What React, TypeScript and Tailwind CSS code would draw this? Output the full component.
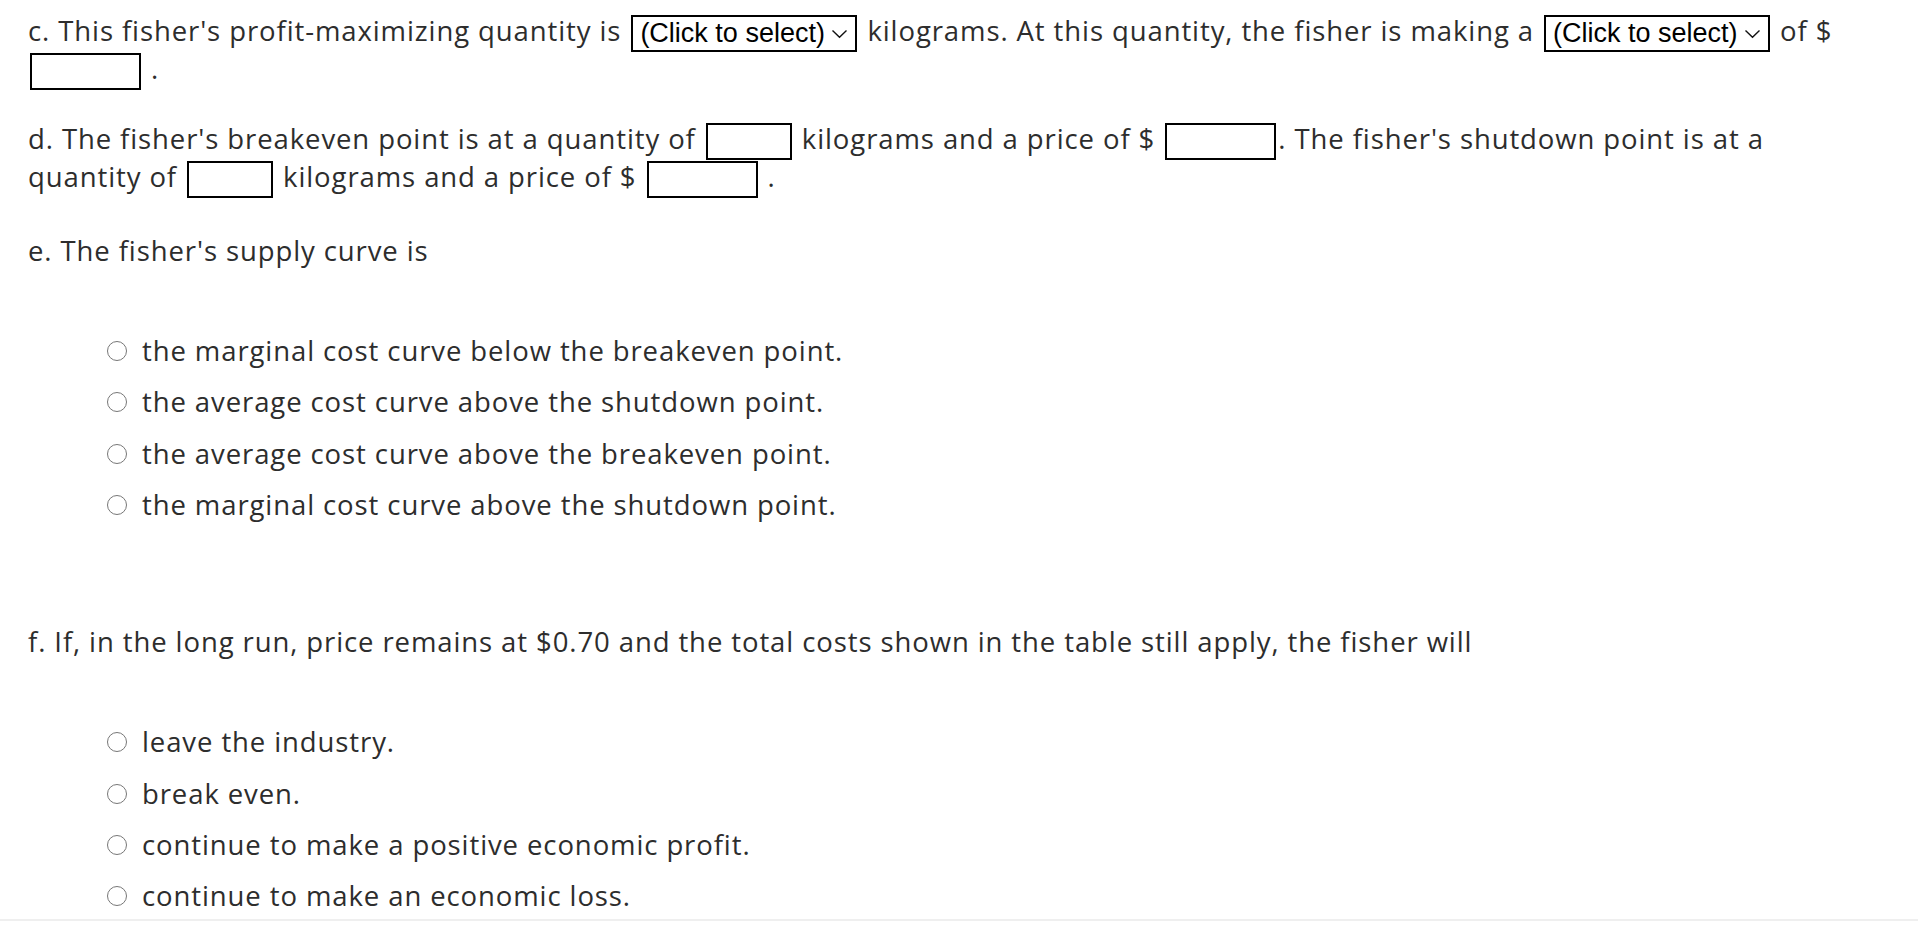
import React from "react";

function Select() {
  return (
    <span className="inline-flex items-center align-middle -my-[6px] h-[37px] w-[226px] border-2 border-black bg-white pl-[7px] pr-[7px] mx-[2px] font-['Liberation_Sans',Arial,sans-serif] text-[27px] leading-none tracking-normal text-black">
      <span className="flex-1 whitespace-nowrap">(Click to select)</span>
      <svg width="17" height="10" viewBox="0 0 17 10" className="shrink-0">
        <path d="M1.5 1.5 L8.5 8.3 L15.5 1.5" fill="none" stroke="#111" strokeWidth="1.4" />
      </svg>
    </span>
  );
}

function Box({ w }: { w: number }) {
  return (
    <span
      className={
        "inline-block align-middle -my-[6px] h-[37px] border-2 border-black bg-white mx-[2px] " +
        (w === 86 ? "w-[86px]" : "w-[111px]")
      }
    />
  );
}

function Option({ text }: { text: string }) {
  return (
    <div className="flex items-center h-[38px]">
      <span className="w-[20px] h-[20px] rounded-full border-[1.6px] border-[#777] bg-white shrink-0" />
      <span className="ml-[15px] whitespace-nowrap">{text}</span>
    </div>
  );
}

export default function App() {
  return (
    <div className="min-h-screen bg-white">
      <div className="font-['Open_Sans','Liberation_Sans',sans-serif] text-[27.5px] tracking-[0.9px] leading-[38px] text-[#2d2d2d] border-b-2 border-[#efefef] pb-[4px]">
        <div className="pl-[28px] pt-[12px]">
          <p className="whitespace-nowrap">
            c. This fisher's profit-maximizing quantity is <Select /> kilograms. At this quantity, the fisher is making a <Select /> of $
            <br />
            <Box w={111} /> .
          </p>
          <p className="mt-[32px] whitespace-nowrap">
            d. The fisher's breakeven point is at a quantity of <Box w={86} /> kilograms and a price of $ <Box w={111} />. The fisher's shutdown point is at a
            <br />
            quantity of <Box w={86} /> kilograms and a price of $ <Box w={111} /> .
          </p>
          <p className="mt-[36px]">e. The fisher's supply curve is</p>
          <div className="ml-[79px] mt-[62px] flex flex-col gap-[13.4px]">
            <Option text="the marginal cost curve below the breakeven point." />
            <Option text="the average cost curve above the shutdown point." />
            <Option text="the average cost curve above the breakeven point." />
            <Option text="the marginal cost curve above the shutdown point." />
          </div>
          <p className="mt-[99px] whitespace-nowrap">
            f. If, in the long run, price remains at $0.70 and the total costs shown in the table still apply, the fisher will
          </p>
          <div className="ml-[79px] mt-[62px] flex flex-col gap-[13.4px]">
            <Option text="leave the industry." />
            <Option text="break even." />
            <Option text="continue to make a positive economic profit." />
            <Option text="continue to make an economic loss." />
          </div>
        </div>
      </div>
    </div>
  );
}
